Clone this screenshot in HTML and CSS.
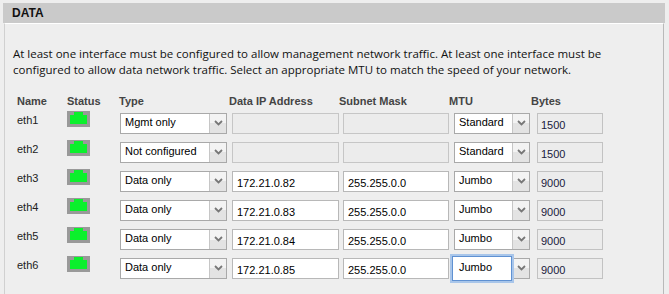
FILE: index.html
```html
<!DOCTYPE html>
<html lang="en">
	<head>
		<meta charset="utf-8">
		<title>Data interfaces</title>
		<link rel="stylesheet" href="styles.css">
	</head>
	<body>

		<div class="panel">
			<div class="panelHead">DATA</div>

			<div class="panelBody">

				<p class="info">At least one interface must be configured to allow management network traffic. At least one interface must be configured to allow data network traffic. Select an appropriate MTU to match the speed of your network.</p>

				<div class="heads">
					<div>Name</div>
					<div>Status</div>
					<div>Type</div>
					<div>Data IP Address</div>
					<div>Subnet Mask</div>
					<div>MTU</div>
					<div>Bytes</div>
				</div>

				<div class="row">
					<div class="name">eth1</div>
					<div class="status"><svg width="23" height="16" viewBox="0 0 23 16"><rect width="23" height="16" fill="#999"/><path d="M3 4h4v-3h9v3h4v9h-17z" fill="#0bf02c"/></svg></div>
					<div class="combo type"><span class="val">Mgmt only</span><span class="btn"><svg width="9" height="6" viewBox="0 0 9 6"><polyline points="1,1 4.5,4.5 8,1" fill="none" stroke="#777" stroke-width="1.8"/></svg></span></div>
					<input class="field off" type="text" value="" disabled>
					<input class="field off mask" type="text" value="" disabled>
					<div class="combo mtu"><span class="val">Standard</span><span class="btn"><svg width="9" height="6" viewBox="0 0 9 6"><polyline points="1,1 4.5,4.5 8,1" fill="none" stroke="#777" stroke-width="1.8"/></svg></span></div>
					<input class="field bytes" type="text" value="1500" readonly>
				</div>

				<div class="row">
					<div class="name">eth2</div>
					<div class="status"><svg width="23" height="16" viewBox="0 0 23 16"><rect width="23" height="16" fill="#999"/><path d="M3 4h4v-3h9v3h4v9h-17z" fill="#0bf02c"/></svg></div>
					<div class="combo type"><span class="val">Not configured</span><span class="btn"><svg width="9" height="6" viewBox="0 0 9 6"><polyline points="1,1 4.5,4.5 8,1" fill="none" stroke="#777" stroke-width="1.8"/></svg></span></div>
					<input class="field off" type="text" value="" disabled>
					<input class="field off mask" type="text" value="" disabled>
					<div class="combo mtu"><span class="val">Standard</span><span class="btn"><svg width="9" height="6" viewBox="0 0 9 6"><polyline points="1,1 4.5,4.5 8,1" fill="none" stroke="#777" stroke-width="1.8"/></svg></span></div>
					<input class="field bytes" type="text" value="1500" readonly>
				</div>

				<div class="row">
					<div class="name">eth3</div>
					<div class="status"><svg width="23" height="16" viewBox="0 0 23 16"><rect width="23" height="16" fill="#999"/><path d="M3 4h4v-3h9v3h4v9h-17z" fill="#0bf02c"/></svg></div>
					<div class="combo type"><span class="val">Data only</span><span class="btn"><svg width="9" height="6" viewBox="0 0 9 6"><polyline points="1,1 4.5,4.5 8,1" fill="none" stroke="#777" stroke-width="1.8"/></svg></span></div>
					<input class="field" type="text" value="172.21.0.82">
					<input class="field mask" type="text" value="255.255.0.0">
					<div class="combo mtu"><span class="val">Jumbo</span><span class="btn"><svg width="9" height="6" viewBox="0 0 9 6"><polyline points="1,1 4.5,4.5 8,1" fill="none" stroke="#777" stroke-width="1.8"/></svg></span></div>
					<input class="field bytes" type="text" value="9000" readonly>
				</div>

				<div class="row">
					<div class="name">eth4</div>
					<div class="status"><svg width="23" height="16" viewBox="0 0 23 16"><rect width="23" height="16" fill="#999"/><path d="M3 4h4v-3h9v3h4v9h-17z" fill="#0bf02c"/></svg></div>
					<div class="combo type"><span class="val">Data only</span><span class="btn"><svg width="9" height="6" viewBox="0 0 9 6"><polyline points="1,1 4.5,4.5 8,1" fill="none" stroke="#777" stroke-width="1.8"/></svg></span></div>
					<input class="field" type="text" value="172.21.0.83">
					<input class="field mask" type="text" value="255.255.0.0">
					<div class="combo mtu"><span class="val">Jumbo</span><span class="btn"><svg width="9" height="6" viewBox="0 0 9 6"><polyline points="1,1 4.5,4.5 8,1" fill="none" stroke="#777" stroke-width="1.8"/></svg></span></div>
					<input class="field bytes" type="text" value="9000" readonly>
				</div>

				<div class="row">
					<div class="name">eth5</div>
					<div class="status"><svg width="23" height="16" viewBox="0 0 23 16"><rect width="23" height="16" fill="#999"/><path d="M3 4h4v-3h9v3h4v9h-17z" fill="#0bf02c"/></svg></div>
					<div class="combo type"><span class="val">Data only</span><span class="btn"><svg width="9" height="6" viewBox="0 0 9 6"><polyline points="1,1 4.5,4.5 8,1" fill="none" stroke="#777" stroke-width="1.8"/></svg></span></div>
					<input class="field" type="text" value="172.21.0.84">
					<input class="field mask" type="text" value="255.255.0.0">
					<div class="combo mtu"><span class="val">Jumbo</span><span class="btn"><svg width="9" height="6" viewBox="0 0 9 6"><polyline points="1,1 4.5,4.5 8,1" fill="none" stroke="#777" stroke-width="1.8"/></svg></span></div>
					<input class="field bytes" type="text" value="9000" readonly>
				</div>

				<div class="row">
					<div class="name">eth6</div>
					<div class="status"><svg width="23" height="16" viewBox="0 0 23 16"><rect width="23" height="16" fill="#999"/><path d="M3 4h4v-3h9v3h4v9h-17z" fill="#0bf02c"/></svg></div>
					<div class="combo type"><span class="val">Data only</span><span class="btn"><svg width="9" height="6" viewBox="0 0 9 6"><polyline points="1,1 4.5,4.5 8,1" fill="none" stroke="#777" stroke-width="1.8"/></svg></span></div>
					<input class="field" type="text" value="172.21.0.85">
					<input class="field mask" type="text" value="255.255.0.0">
					<div class="combo mtu focus"><span class="val">Jumbo</span><span class="btn"><svg width="9" height="6" viewBox="0 0 9 6"><polyline points="1,1 4.5,4.5 8,1" fill="none" stroke="#777" stroke-width="1.8"/></svg></span></div>
					<input class="field bytes" type="text" value="9000" readonly>
				</div>

			</div>
		</div>

	</body>
</html>
```

FILE: styles.css
```css
body{
	margin: 0;
	padding: 0;
	background-color: #eeeeee;
	font-family: "Liberation Sans", Arial, sans-serif;
	font-size: 11px;
	color: #222;
}

.panel{
	width: 662px;
	margin: 3px 0 0 3px;
}

.panelHead{
	height: 20px;
	line-height: 21px;
	padding-left: 9px;
	background-color: #cacaca;
	font-weight: bold;
	font-size: 12px;
	color: #111;
}

.panelBody{
	margin: 0 1px;
	padding: 22px 0 9px 12px;
	border-top: 1px solid #fff;
	border-left: 1px solid #d0d0d0;
	border-right: 1px solid #b9b9b9;
	border-bottom: 1px solid #bdbdbd;
}

.info{
	margin: 0 0 17px -4px;
	width: 640px;
	font-family: "Open Sans", "Noto Sans", sans-serif;
	font-size: 11.5px;
	line-height: 16px;
	color: #111;
}

.heads{
	display: grid;
	grid-template-columns: 50px 52px 110px 110px 110px 82px auto;
	margin-bottom: 5px;
	font-weight: bold;
	font-size: 11px;
	line-height: 13px;
	color: #444;
}

.row{
	display: grid;
	grid-template-columns: 50px 53px 112px 111px 111px 83px 66px;
	height: 21px;
	margin-bottom: 8px;
}

.name{
	line-height: 12px;
	padding-top: 1px;
}

.status{
	margin-top: -2px;
}

.status svg{
	display: block;
}

.combo{
	display: flex;
	height: 21px;
	box-sizing: border-box;
	border: 1px solid #a9a9a9;
	background-color: #fff;
}

.type{
	width: 107px;
}

.mtu{
	width: 76px;
}

.combo .val{
	flex: 1;
	padding: 2px 0 0 4px;
	line-height: 13px;
	color: #000;
}

.combo .btn{
	width: 16px;
	border-left: 1px solid #c6c6c6;
	background: linear-gradient(#f3f3f3 50%, #e3e3e3 50%);
	display: flex;
	align-items: center;
	justify-content: center;
}

.combo .btn svg{
	margin-top: -1px;
}

.focus .val{
	margin: -3px 0 -3px -3px;
	padding: 4px 0 0 6px;
	border: 1px solid #5f91d2;
	box-shadow: 0 0 0 2px #a9c6ea;
	background-color: #fff;
	position: relative;
}

.field{
	width: 107px;
	height: 21px;
	box-sizing: border-box;
	margin: 0;
	padding: 2px 0 0 4px;
	border: 1px solid #b8b8b8;
	background-color: #fff;
	font-family: "Liberation Sans", Arial, sans-serif;
	font-size: 11px;
	color: #000;
	outline: none;
}

.mask{
	width: 106px;
}

.off{
	background-color: #ececec;
	border-color: #c6c6c6;
}

.bytes{
	width: 66px;
	padding-left: 3px;
	background-color: #ececec;
	border-color: #c2c2c2;
	color: #1a1a3c;
}
```
